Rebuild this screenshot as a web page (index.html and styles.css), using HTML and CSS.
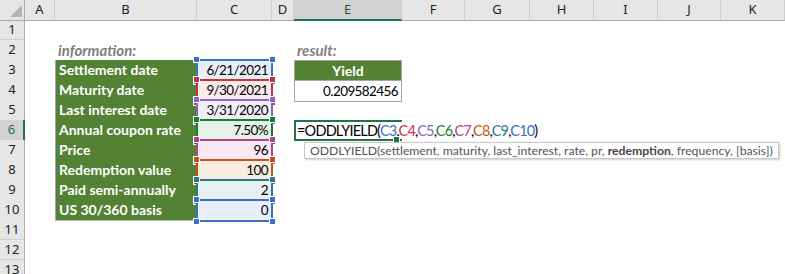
FILE: index.html
```html
<!DOCTYPE html>
<html lang="en">
<head>
    <meta charset="UTF-8">
    <title>ODDLYIELD</title>
    <link rel="stylesheet" href="styles.css">
</head>
<body>
    <div class="sheet">
        <div class="row hdr">
            <div class="corner"></div>
            <div class="ch">A</div>
            <div class="ch">B</div>
            <div class="ch">C</div>
            <div class="ch">D</div>
            <div class="ch sel">E</div>
            <div class="ch">F</div>
            <div class="ch">G</div>
            <div class="ch">H</div>
            <div class="ch">I</div>
            <div class="ch">J</div>
            <div class="ch">K</div>
        </div>

        <div class="row"><div class="rh">1</div></div>

        <div class="row">
            <div class="rh">2</div>
            <div class="cell col-b title">information:</div>
            <div class="cell col-e title">result:</div>
        </div>

        <div class="row">
            <div class="rh">3</div>
            <div class="cell col-b lbl">Settlement date</div>
            <div class="cell col-c val r-blue">6/21/2021<span class="rng"><i class="h tl"></i><i class="h tr"></i><i class="h bl"></i><i class="h br"></i></span></div>
            <div class="cell col-e yhead">Yield</div>
        </div>

        <div class="row">
            <div class="rh">4</div>
            <div class="cell col-b lbl">Maturity date</div>
            <div class="cell col-c val r-red">9/30/2021<span class="rng"><i class="h tl"></i><i class="h tr"></i><i class="h bl"></i><i class="h br"></i></span></div>
            <div class="cell col-e yval">0.209582456</div>
        </div>

        <div class="row">
            <div class="rh">5</div>
            <div class="cell col-b lbl">Last interest date</div>
            <div class="cell col-c val r-purple">3/31/2020<span class="rng"><i class="h tl"></i><i class="h tr"></i><i class="h bl"></i><i class="h br"></i></span></div>
        </div>

        <div class="row">
            <div class="rh active">6</div>
            <div class="cell col-b lbl">Annual coupon rate</div>
            <div class="cell col-c val r-green">7.50%<span class="rng"><i class="h tl"></i><i class="h tr"></i><i class="h bl"></i><i class="h br"></i></span></div>
            <div class="cell col-e fx">
                <span class="fx-text">=ODDLYIELD(<span class="t-blue">C3</span>,<span class="t-red">C4</span>,<span class="t-purple">C5</span>,<span class="t-green">C6</span>,<span class="t-magenta">C7</span>,<span class="t-orange">C8</span>,<span class="t-teal">C9</span>,<span class="t-blue">C10</span>)</span>
                <i class="fill"></i>
                <div class="tip">ODDLYIELD(settlement, maturity, last_interest, rate, pr, <b>redemption</b>, frequency, [basis])</div>
            </div>
        </div>

        <div class="row">
            <div class="rh">7</div>
            <div class="cell col-b lbl">Price</div>
            <div class="cell col-c val r-magenta">96<span class="rng"><i class="h tl"></i><i class="h tr"></i><i class="h bl"></i><i class="h br"></i></span></div>
        </div>

        <div class="row">
            <div class="rh">8</div>
            <div class="cell col-b lbl">Redemption value</div>
            <div class="cell col-c val r-orange">100<span class="rng"><i class="h tl"></i><i class="h tr"></i><i class="h bl"></i><i class="h br"></i></span></div>
        </div>

        <div class="row">
            <div class="rh">9</div>
            <div class="cell col-b lbl">Paid semi-annually</div>
            <div class="cell col-c val r-teal">2<span class="rng"><i class="h tl"></i><i class="h tr"></i><i class="h bl"></i><i class="h br"></i></span></div>
        </div>

        <div class="row">
            <div class="rh">10</div>
            <div class="cell col-b lbl">US 30/360 basis</div>
            <div class="cell col-c val r-blue2">0<span class="rng"><i class="h tl"></i><i class="h tr"></i><i class="h bl"></i><i class="h br"></i></span></div>
        </div>

        <div class="row"><div class="rh">11</div></div>
        <div class="row"><div class="rh">12</div></div>
        <div class="row"><div class="rh">13</div></div>
    </div>
</body>
</html>
```

FILE: styles.css
```css
body {
    margin: 0;
    background: #fff;
    overflow: hidden;
    font-family: Lato, "Liberation Sans", sans-serif;
    font-size: 14px;
    color: #000;
}

.sheet {
    display: flex;
    flex-direction: column;
    width: 785px;
}

.row {
    display: grid;
    grid-template-columns: 25px 30px 142px 75px 22px 108px 63px 65px 64px 64px 63px 64px;
    height: 20px;
}

/* headers */
.hdr {
    background: #e6e6e6;
}

.corner,
.ch {
    box-sizing: border-box;
    border-bottom: 1px solid #ababab;
    border-right: 1px solid #cdcdcd;
}

.corner {
    position: relative;
    border-right-color: #ababab;
}

.corner::after {
    content: "";
    position: absolute;
    left: 10px;
    top: 5px;
    width: 12px;
    height: 12px;
    background: #b4b4b4;
    clip-path: polygon(100% 0, 100% 100%, 0 100%);
}

.ch {
    font-family: "Noto Sans", sans-serif;
    font-size: 13px;
    line-height: 19px;
    text-align: center;
    color: #222;
}

.ch.sel {
    background: #d2d2d2;
    color: #1d5b36;
    border-bottom: 2px solid #217346;
}

.rh {
    grid-column: 1;
    box-sizing: border-box;
    background: #e6e6e6;
    border-right: 1px solid #ababab;
    border-bottom: 1px solid #d0d0d0;
    font-family: "Noto Sans", sans-serif;
    font-size: 13px;
    line-height: 19px;
    text-align: center;
    color: #222;
}

.rh.active {
    background: #d2d2d2;
    color: #217346;
    border-right: 2px solid #217346;
}

/* cells */
.cell {
    box-sizing: border-box;
    line-height: 20px;
    white-space: nowrap;
}

.col-b { grid-column: 3; }
.col-c { grid-column: 4; }
.col-e { grid-column: 6; }

.title {
    font-size: 15px;
    font-style: italic;
    font-weight: 700;
    color: #808080;
    padding-left: 3px;
    border-bottom: 1px solid #a6a6a6;
}

.lbl {
    background: #548235;
    color: #fff;
    font-weight: 700;
    padding-left: 3px;
    border-left: 1px solid #a6a6a6;
    border-bottom: 1px solid #b9c4b0;
}

.val,
.yval {
    font-size: 13.5px;
    letter-spacing: -0.6px;
}

.val {
    position: relative;
    text-align: right;
    padding-right: 4px;
    background: var(--tint);
}

.yhead {
    background: #548235;
    color: #fff;
    font-weight: 700;
    text-align: center;
    border: 1px solid #a6a6a6;
    border-bottom: none;
}

.yval {
    text-align: right;
    padding-right: 3px;
    border: 1px solid #a6a6a6;
}

/* range highlight of the formula arguments */
.rng {
    position: absolute;
    left: -1px;
    right: -1px;
    top: -1px;
    bottom: -1px;
    border: 2px solid var(--rc);
}

.h {
    position: absolute;
    width: 5px;
    height: 5px;
    background: var(--rc);
    border: 1px solid #fff;
}

.h.tl { left: -5px; top: -5px; }
.h.tr { right: -5px; top: -5px; }
.h.bl { left: -5px; bottom: -5px; }
.h.br { right: -5px; bottom: -5px; }

.r-blue    { --rc: #3a6fca; --tint: #e9eff9; }
.r-red     { --rc: #c8333d; --tint: #fbeaea; }
.r-purple  { --rc: #8a62c7; --tint: #f2eef9; }
.r-green   { --rc: #17802e; --tint: #e6f2e7; }
.r-magenta { --rc: #b2448f; --tint: #f7e9f3; }
.r-orange  { --rc: #c55412; --tint: #f9ece3; }
.r-teal    { --rc: #2a7a8c; --tint: #e8f0f2; }
.r-blue2   { --rc: #3a6fca; --tint: #e9eff9; }

.t-blue    { color: #3a6fca; }
.t-red     { color: #c8333d; }
.t-purple  { color: #8a62c7; }
.t-green   { color: #17802e; }
.t-magenta { color: #b2448f; }
.t-orange  { color: #c55412; }
.t-teal    { color: #2a7a8c; }

/* cell being edited */
.fx {
    position: relative;
    padding-left: 1px;
    line-height: 17px;
    border-left: 2px solid #217346;
    border-top: 2px solid #217346;
    border-bottom: 2px solid #217346;
}

.fx-text {
    font-size: 14.5px;
    letter-spacing: -0.8px;
}

.fill {
    position: absolute;
    right: 2px;
    bottom: -4px;
    width: 5px;
    height: 5px;
    background: #217346;
    border: 1px solid #fff;
}

.tip {
    position: absolute;
    left: 8px;
    top: 20px;
    z-index: 2;
    height: 17px;
    box-sizing: border-box;
    padding: 0 5px;
    background: #fff;
    border: 1px solid #c6c6c6;
    box-shadow: 1px 1px 2px rgba(0, 0, 0, 0.2);
    font-family: Lato, sans-serif;
    font-size: 12.2px;
    line-height: 15px;
    color: #555;
}

.tip b {
    color: #444;
}
```
